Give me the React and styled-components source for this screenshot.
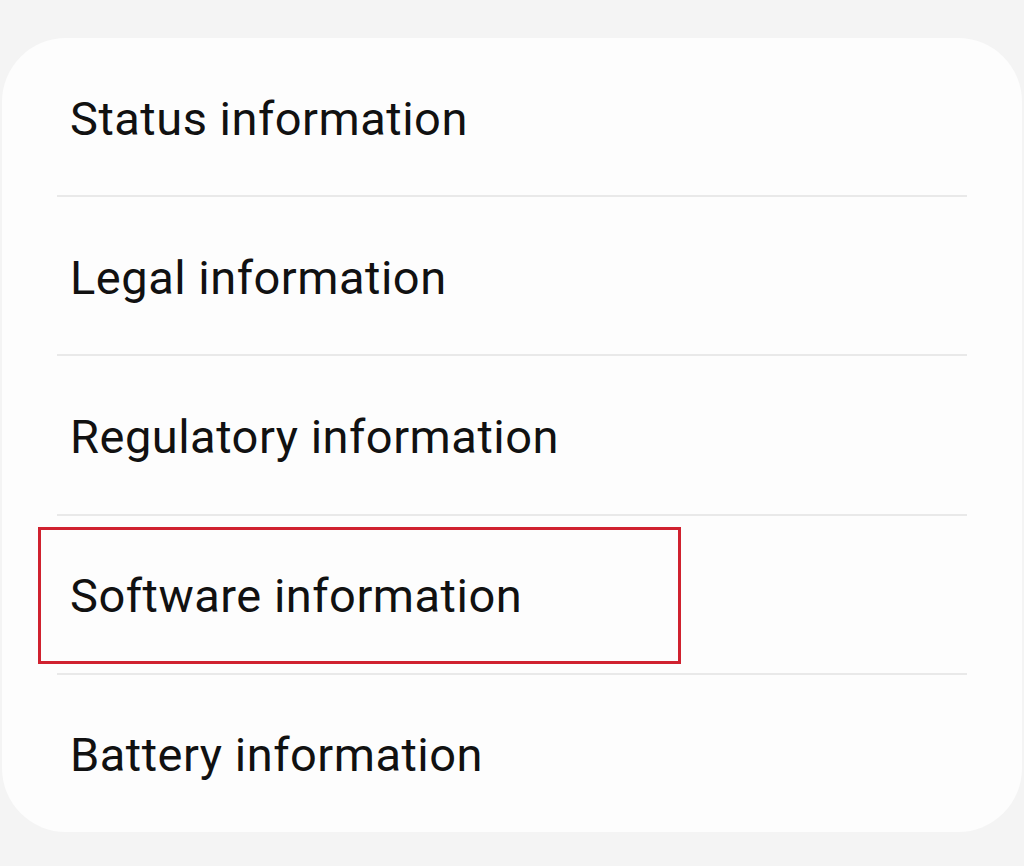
import React from 'react';
import styled, { createGlobalStyle } from 'styled-components';

const GlobalStyle = createGlobalStyle`
  html, body {
    margin: 0;
    padding: 0;
    background: #f4f4f4;
  }
  body {
    font-family: Roboto, "Noto Sans", "Liberation Sans", sans-serif;
  }
`;

const Page = styled.div`
  width: 1024px;
  height: 866px;
  box-sizing: border-box;
  padding: 38px 2px 34px 2px;
  background: #f4f4f4;
`;

const Card = styled.div`
  height: 100%;
  box-sizing: border-box;
  background: #fdfdfd;
  border-radius: 64px;
  padding: 0 55px 0 55px;
  display: flex;
  flex-direction: column;
`;

const Row = styled.div`
  position: relative;
  height: 158px;
  display: flex;
  align-items: center;
  padding: 3px 0 0 13px;
  box-sizing: content-box;
  height: 155px;
  border-top: ${(p) => (p.first ? 'none' : '2px solid #e9e9e9')};
`;

const Label = styled.span`
  font-size: 47px;
  color: #111;
  letter-spacing: 0.5px;
`;

const Highlight = styled.div`
  position: absolute;
  left: -19px;
  top: 11px;
  width: 643px;
  height: 137px;
  box-sizing: border-box;
  border: 3px solid #d0212f;
  pointer-events: none;
`;

const items = [
  'Status information',
  'Legal information',
  'Regulatory information',
  'Software information',
  'Battery information',
];

export default function App() {
  return (
    <Page>
      <GlobalStyle />
      <Card>
        {items.map((item, i) => (
          <Row key={item} first={i === 0}>
            <Label>{item}</Label>
            {item === 'Software information' && <Highlight />}
          </Row>
        ))}
      </Card>
    </Page>
  );
}
